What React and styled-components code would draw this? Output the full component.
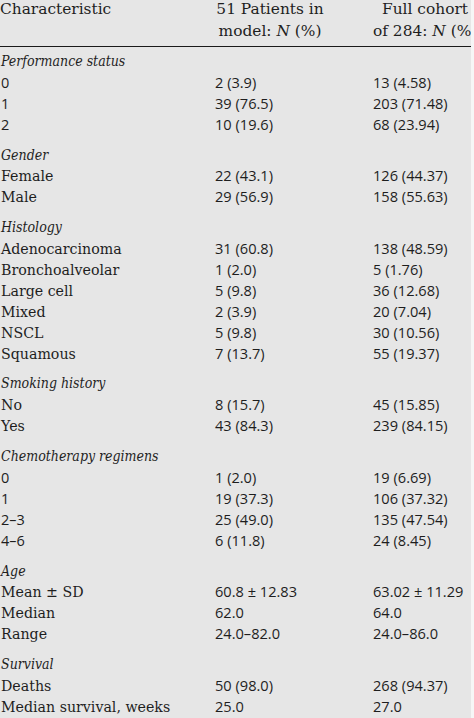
import React from 'react';
import styled, { createGlobalStyle } from 'styled-components';

const GlobalStyle = createGlobalStyle`
  html, body {
    margin: 0;
    padding: 0;
    width: 474px;
    height: 718px;
    overflow: hidden;
    background-color: #e6e6e6;
  }
`;

const serif = "'DejaVu Serif', 'Liberation Serif', serif";
const sans = "'Open Sans', 'Noto Sans', sans-serif";

const Page = styled.div`
  width: 471px;
  height: 718px;
  overflow: hidden;
  border-right: 3px solid #f6f6f6;
  color: #1e1e1e;
`;

const Head = styled.div`
  display: grid;
  grid-template-columns: 215px 158px 104px;
  margin-top: -2px;
  padding-bottom: 4px;
  border-bottom: 1.5px solid #1a1a1a;
  font-family: ${serif};
  font-size: 15.4px;
  line-height: 22px;
`;

const HeadCell = styled.div`
  width: ${(p) => p.$w || 'auto'};
  text-align: ${(p) => (p.$center ? 'center' : 'left')};
  white-space: nowrap;
`;

const Body = styled.div`
  padding-top: 4px;
`;

const Group = styled.div`
  & + & {
    margin-top: 10px;
  }
`;

const Row = styled.div`
  display: grid;
  grid-template-columns: 215px 158px 104px;
  align-items: baseline;
  height: 20.9px;
  line-height: 20.9px;
  white-space: nowrap;
`;

const Label = styled.span`
  padding-left: 1px;
  font-family: ${(p) => (p.$num ? sans : serif)};
  font-size: ${(p) => (p.$num ? '14.5px' : '14.2px')};
`;

const GroupTitle = styled.span`
  padding-left: 1px;
  font-family: ${serif};
  font-style: italic;
  font-stretch: condensed;
  font-size: 14px;
`;

const Value = styled.span`
  font-family: ${sans};
  font-size: 14.6px;
`;

const groups = [
  {
    title: 'Performance status',
    rows: [
      ['0', '2 (3.9)', '13 (4.58)', true],
      ['1', '39 (76.5)', '203 (71.48)', true],
      ['2', '10 (19.6)', '68 (23.94)', true],
    ],
  },
  {
    title: 'Gender',
    rows: [
      ['Female', '22 (43.1)', '126 (44.37)'],
      ['Male', '29 (56.9)', '158 (55.63)'],
    ],
  },
  {
    title: 'Histology',
    rows: [
      ['Adenocarcinoma', '31 (60.8)', '138 (48.59)'],
      ['Bronchoalveolar', '1 (2.0)', '5 (1.76)'],
      ['Large cell', '5 (9.8)', '36 (12.68)'],
      ['Mixed', '2 (3.9)', '20 (7.04)'],
      ['NSCL', '5 (9.8)', '30 (10.56)'],
      ['Squamous', '7 (13.7)', '55 (19.37)'],
    ],
  },
  {
    title: 'Smoking history',
    rows: [
      ['No', '8 (15.7)', '45 (15.85)'],
      ['Yes', '43 (84.3)', '239 (84.15)'],
    ],
  },
  {
    title: 'Chemotherapy regimens',
    rows: [
      ['0', '1 (2.0)', '19 (6.69)', true],
      ['1', '19 (37.3)', '106 (37.32)', true],
      ['2–3', '25 (49.0)', '135 (47.54)', true],
      ['4–6', '6 (11.8)', '24 (8.45)', true],
    ],
  },
  {
    title: 'Age',
    rows: [
      ['Mean ± SD', '60.8 ± 12.83', '63.02 ± 11.29'],
      ['Median', '62.0', '64.0'],
      ['Range', '24.0–82.0', '24.0–86.0'],
    ],
  },
  {
    title: 'Survival',
    rows: [
      ['Deaths', '50 (98.0)', '268 (94.37)'],
      ['Median survival, weeks', '25.0', '27.0'],
    ],
  },
];

export default function App() {
  return (
    <Page>
      <GlobalStyle />
      <Head>
        <HeadCell>Characteristic</HeadCell>
        <HeadCell $center $w="110px">
          51 Patients in
          <br />
          model: <i>N</i> (%)
        </HeadCell>
        <HeadCell $center $w="104px">
          Full cohort
          <br />
          of 284: <i>N</i> (%)
        </HeadCell>
      </Head>
      <Body>
        {groups.map((g) => (
          <Group key={g.title}>
            <Row>
              <GroupTitle>{g.title}</GroupTitle>
            </Row>
            {g.rows.map(([label, a, b, num]) => (
              <Row key={label}>
                <Label $num={num}>{label}</Label>
                <Value>{a}</Value>
                <Value>{b}</Value>
              </Row>
            ))}
          </Group>
        ))}
      </Body>
    </Page>
  );
}
